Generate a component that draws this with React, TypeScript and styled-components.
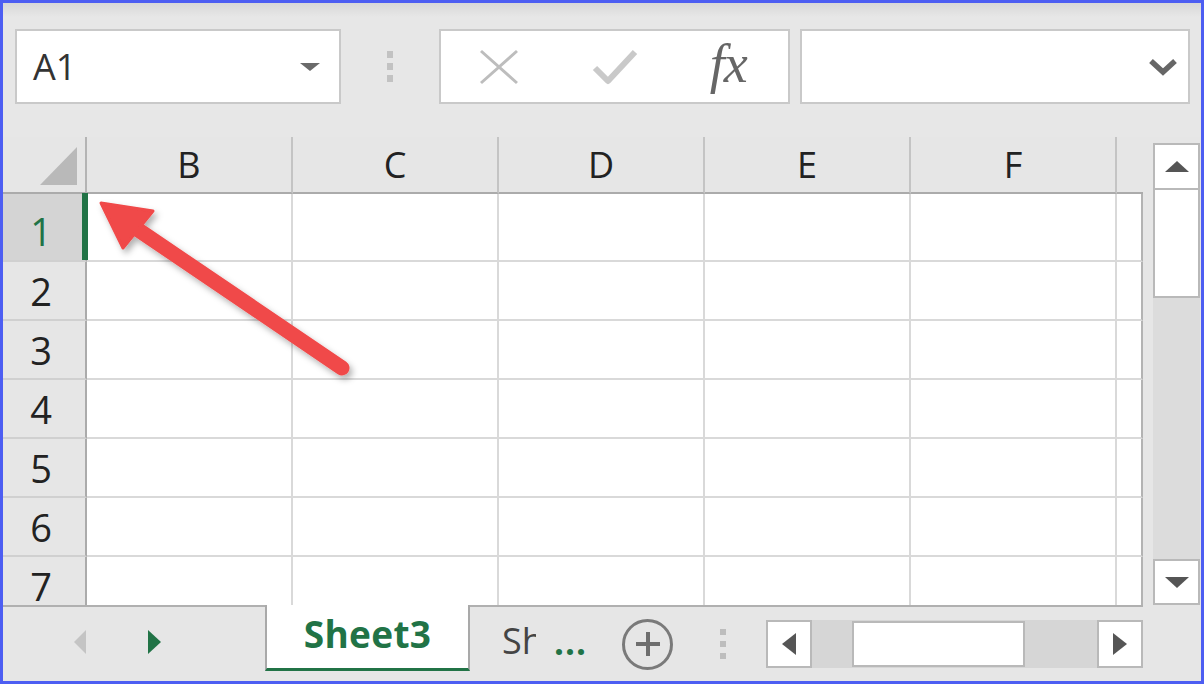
import React from 'react';
import styled, { createGlobalStyle } from 'styled-components';

const GlobalStyle = createGlobalStyle`
  html, body {
    margin: 0;
    padding: 0;
    background: #fff;
  }
  body {
    font-family: "Open Sans", "Noto Sans", sans-serif;
  }
  * {
    box-sizing: border-box;
  }
`;

const EXCEL_GREEN = '#217346';

const Frame = styled.div`
  width: 1204px;
  height: 684px;
  border: 3px solid #4d5ef2;
  background: #e6e6e6;
  display: flex;
  flex-direction: column;
  overflow: hidden;
`;

// ---- formula toolbar ----
const Toolbar = styled.div`
  height: 134px;
  flex: none;
  padding: 26px 11px 0 12px;
  display: flex;
  align-items: flex-start;
  background: linear-gradient(#d8d8d8 0, #e7e7e7 14px, #e7e7e7 100%);
`;

const FieldBox = styled.div<{ $width?: number }>`
  height: 75px;
  width: ${(p) => (p.$width ? `${p.$width}px` : 'auto')};
  flex: ${(p) => (p.$width ? 'none' : '1')};
  background: #fff;
  border: 2px solid #c9c9c9;
  display: flex;
  align-items: center;
`;

const NameBox = styled(FieldBox)`
  justify-content: space-between;
  padding: 0 19px 0 16px;
`;

const NameText = styled.span`
  font-size: 36px;
  color: #333;
  line-height: 1;
`;

const SmallCaret = styled.span`
  width: 0;
  height: 0;
  border-left: 10px solid transparent;
  border-right: 10px solid transparent;
  border-top: 8px solid #6a6a6a;
`;

const GripArea = styled.div`
  width: 98px;
  height: 75px;
  flex: none;
  display: flex;
  align-items: center;
  justify-content: center;
`;

const Grip = styled.div`
  display: flex;
  flex-direction: column;
  gap: 5px;
  span {
    width: 6px;
    height: 7px;
    background: #c2c2c2;
  }
`;

const IconSlot = styled.div`
  width: 116px;
  height: 100%;
  display: flex;
  align-items: center;
  justify-content: center;
`;

const FxGlyph = styled.span`
  font-family: "Liberation Serif", "DejaVu Serif", serif;
  font-style: italic;
  font-size: 54px;
  line-height: 1;
  color: #666;
  margin: -6px 0 0 -4px;
  letter-spacing: -1px;
`;

const FormulaBox = styled(FieldBox)`
  margin-left: 10px;
  justify-content: flex-end;
  padding-right: 10px;
`;

// ---- sheet ----
const Main = styled.div`
  height: 468px;
  flex: none;
  display: flex;
`;

const SheetGrid = styled.div`
  position: relative;
  width: 1140px;
  height: 468px;
  overflow: hidden;
  display: grid;
  grid-template-columns: 84px repeat(5, 206px) 1fr;
  grid-template-rows: 57px 68px repeat(6, 59px);
  background: #fff;
`;

const CornerCell = styled.div`
  background: #e6e6e6;
  border-right: 2px solid #b4b4b4;
  border-bottom: 2px solid #ababab;
  display: flex;
  align-items: flex-end;
  justify-content: flex-end;
  padding: 0 8px 7px 0;
  &::after {
    content: '';
    width: 0;
    height: 0;
    border-left: 37px solid transparent;
    border-bottom: 38px solid #b9b9b9;
  }
`;

const ColHeader = styled.div<{ $last?: boolean }>`
  background: #e6e6e6;
  border-right: ${(p) => (p.$last ? 'none' : '2px solid #c4c4c4')};
  border-bottom: 2px solid #ababab;
  display: flex;
  align-items: center;
  justify-content: center;
  font-size: 36px;
  color: #222;
`;

const RowHeader = styled.div<{ $active?: boolean }>`
  background: ${(p) => (p.$active ? '#d4d4d4' : '#e6e6e6')};
  color: ${(p) => (p.$active ? EXCEL_GREEN : '#222')};
  border-right: 2px solid #ababab;
  border-bottom: 2px solid #d0d0d0;
  display: flex;
  align-items: center;
  justify-content: center;
  padding: ${(p) => (p.$active ? '8px' : '0')} 6px 0 0;
  font-size: 38px;
`;

const Cell = styled.div<{ $last?: boolean; $selected?: boolean }>`
  position: relative;
  border-right: 2px solid ${(p) => (p.$last ? '#b3b3b3' : '#d9d9d9')};
  border-bottom: 2px solid #d9d9d9;
  ${(p) =>
    p.$selected &&
    `
    &::before {
      content: '';
      position: absolute;
      left: -5px;
      top: -1px;
      bottom: 0;
      width: 6px;
      background: ${EXCEL_GREEN};
    }
  `}
`;

const ArrowOverlay = styled.svg`
  position: absolute;
  left: 0;
  top: 0;
  pointer-events: none;
`;

const VScroll = styled.div`
  margin: 6px 0 0 10px;
  width: 47px;
  display: flex;
  flex-direction: column;
`;

const ScrollButton = styled.div<{ $w?: number; $h?: number }>`
  width: ${(p) => p.$w ?? 47}px;
  height: ${(p) => p.$h ?? 47}px;
  flex: none;
  background: #fff;
  border: 2px solid #b9b9b9;
  display: flex;
  align-items: center;
  justify-content: center;
`;

// $w / $h are the drawn width and height of the triangle
const Tri = styled.span<{ $dir: 'up' | 'down' | 'left' | 'right'; $color?: string; $w: number; $h: number }>`
  width: 0;
  height: 0;
  ${(p) => {
    const c = p.$color ?? '#555';
    if (p.$dir === 'up') return `border-left: ${p.$w / 2}px solid transparent; border-right: ${p.$w / 2}px solid transparent; border-bottom: ${p.$h}px solid ${c};`;
    if (p.$dir === 'down') return `border-left: ${p.$w / 2}px solid transparent; border-right: ${p.$w / 2}px solid transparent; border-top: ${p.$h}px solid ${c};`;
    if (p.$dir === 'left') return `border-top: ${p.$h / 2}px solid transparent; border-bottom: ${p.$h / 2}px solid transparent; border-right: ${p.$w}px solid ${c};`;
    return `border-top: ${p.$h / 2}px solid transparent; border-bottom: ${p.$h / 2}px solid transparent; border-left: ${p.$w}px solid ${c};`;
  }}
`;

const VThumb = styled.div`
  height: 108px;
  flex: none;
  background: #fff;
  border: 2px solid #b9b9b9;
  border-top: none;
`;

const Track = styled.div`
  flex: 1;
  background: #dcdcdc;
`;

// ---- bottom tab bar ----
const BottomBar = styled.div`
  flex: 1;
  display: flex;
  align-items: flex-start;
`;

const TabNav = styled.div`
  width: 262px;
  height: 100%;
  border-top: 2px solid #b0b0b0;
  display: flex;
  align-items: center;
  padding: 0 0 4px 71px;
  gap: 62px;
`;

const SheetTab = styled.div`
  width: 205px;
  height: 66px;
  flex: none;
  background: #fff;
  border-left: 2px solid #a9a9a9;
  border-right: 2px solid #a9a9a9;
  border-bottom: 3px solid ${EXCEL_GREEN};
  display: flex;
  align-items: center;
  justify-content: center;
  padding-bottom: 6px;
  font-size: 37px;
  font-weight: 700;
  letter-spacing: 0.3px;
  color: ${EXCEL_GREEN};
`;

const TabRest = styled.div`
  width: 673px;
  height: 100%;
  flex: none;
  border-top: 2px solid #b0b0b0;
  display: flex;
  align-items: center;
`;

const ClippedLabel = styled.span`
  margin: -8px 0 0 32px;
  width: 34px;
  flex: none;
  overflow: hidden;
  white-space: nowrap;
  font-size: 36px;
  color: #444;
`;

const MoreDots = styled.span`
  margin: -6px 0 0 18px;
  width: 38px;
  flex: none;
  font-size: 35px;
  font-weight: 700;
  color: ${EXCEL_GREEN};
  letter-spacing: 1px;
`;

const AddSheet = styled.div`
  margin-left: 30px;
  width: 51px;
  height: 51px;
  flex: none;
  border: 3px solid #7a7a7a;
  border-radius: 50%;
  display: flex;
  align-items: center;
  justify-content: center;
`;

const BarGrip = styled(Grip)`
  margin-left: 47px;
  gap: 6px;
  span {
    width: 6px;
    height: 6px;
    background: #bdbdbd;
  }
`;

const HScroll = styled.div`
  margin-left: 40px;
  height: 48px;
  display: flex;
`;

const HTrack = styled.div`
  width: 285px;
  background: #d6d6d6;
  display: flex;
  align-items: center;
  padding-left: 40px;
`;

const HThumb = styled.div`
  width: 173px;
  height: 46px;
  background: #fff;
  border: 2px solid #b9b9b9;
`;

const columns = ['B', 'C', 'D', 'E', 'F', ''];
const rows = [1, 2, 3, 4, 5, 6, 7];

export default function App() {
  return (
    <>
      <GlobalStyle />
      <Frame>
        <Toolbar>
          <NameBox $width={326}>
            <NameText>A1</NameText>
            <SmallCaret />
          </NameBox>
          <GripArea>
            <Grip>
              <span />
              <span />
              <span />
            </Grip>
          </GripArea>
          <FieldBox $width={351}>
            <IconSlot>
              <svg width="40" height="36" viewBox="0 0 40 36">
                <path d="M2 2 L38 34 M38 2 L2 34" stroke="#bdbdbd" strokeWidth="3" fill="none" />
              </svg>
            </IconSlot>
            <IconSlot>
              <svg width="46" height="38" viewBox="0 0 46 38">
                <path d="M3 20 L16 33 L43 4" stroke="#c9c9c9" strokeWidth="6" fill="none" strokeLinejoin="round" />
              </svg>
            </IconSlot>
            <IconSlot>
              <FxGlyph>fx</FxGlyph>
            </IconSlot>
          </FieldBox>
          <FormulaBox>
            <svg width="30" height="18" viewBox="0 0 30 18">
              <path d="M3 3 L15 14 L27 3" stroke="#666" strokeWidth="5.5" fill="none" />
            </svg>
          </FormulaBox>
        </Toolbar>

        <Main>
          <SheetGrid>
            <CornerCell />
            {columns.map((c, i) => (
              <ColHeader key={i} $last={i === columns.length - 1}>
                {c}
              </ColHeader>
            ))}
            {rows.map((r) => (
              <React.Fragment key={r}>
                <RowHeader $active={r === 1}>{r}</RowHeader>
                {columns.map((c, i) => (
                  <Cell key={i} $last={i === columns.length - 1} $selected={r === 1 && i === 0} />
                ))}
              </React.Fragment>
            ))}
            <ArrowOverlay width="400" height="260" viewBox="0 0 400 260">
              <defs>
                <filter id="arrowShadow" x="-20%" y="-20%" width="150%" height="150%">
                  <feDropShadow dx="3" dy="4" stdDeviation="3" floodColor="#000" floodOpacity="0.3" />
                </filter>
              </defs>
              <g filter="url(#arrowShadow)" fill="#f04848" stroke="#f04848">
                <line x1="134" y1="92" x2="339" y2="231" strokeWidth="15" strokeLinecap="round" />
                <polygon points="98,66 150,74 120,111" strokeWidth="3" strokeLinejoin="round" />
              </g>
            </ArrowOverlay>
          </SheetGrid>
          <VScroll>
            <ScrollButton>
              <Tri $dir="up" $w={25} $h={11} />
            </ScrollButton>
            <VThumb />
            <Track />
            <ScrollButton $h={46}>
              <Tri $dir="down" $w={25} $h={11} />
            </ScrollButton>
          </VScroll>
        </Main>

        <BottomBar>
          <TabNav>
            <Tri $dir="left" $color="#c4c4c4" $w={12} $h={24} />
            <Tri $dir="right" $color={EXCEL_GREEN} $w={13} $h={24} />
          </TabNav>
          <SheetTab>Sheet3</SheetTab>
          <TabRest>
            <ClippedLabel>Sh</ClippedLabel>
            <MoreDots>...</MoreDots>
            <AddSheet>
              <svg width="28" height="28" viewBox="0 0 28 28">
                <path d="M14 2 V26 M2 14 H26" stroke="#6e6e6e" strokeWidth="4" />
              </svg>
            </AddSheet>
            <BarGrip>
              <span />
              <span />
              <span />
            </BarGrip>
            <HScroll>
              <ScrollButton $w={46} $h={48}>
                <Tri $dir="left" $w={14} $h={22} />
              </ScrollButton>
              <HTrack>
                <HThumb />
              </HTrack>
              <ScrollButton $w={46} $h={48}>
                <Tri $dir="right" $w={14} $h={22} />
              </ScrollButton>
            </HScroll>
          </TabRest>
        </BottomBar>
      </Frame>
    </>
  );
}
